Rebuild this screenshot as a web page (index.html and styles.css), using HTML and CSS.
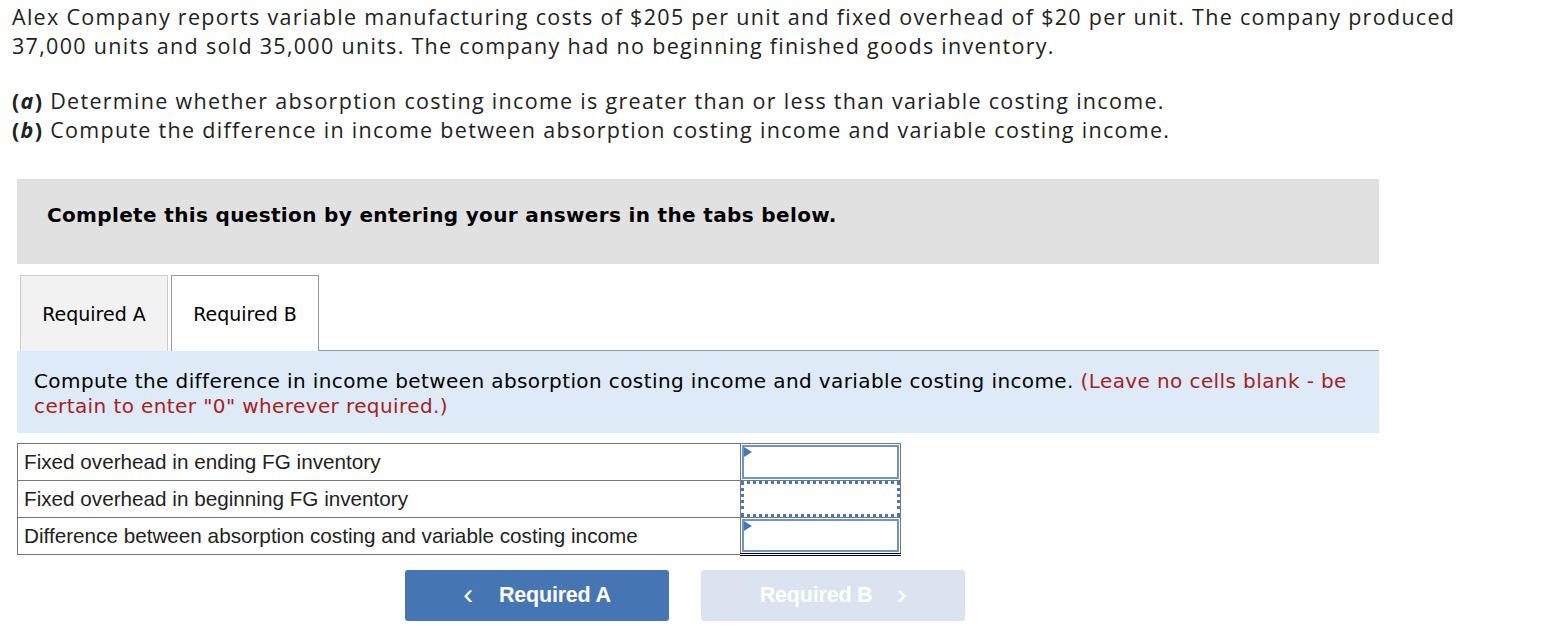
FILE: index.html
```html
<!DOCTYPE html>
<html>
<head>
<meta charset="utf-8">
<link rel="stylesheet" href="styles.css">
</head>
<body>
<div class="question">
  <p class="intro">Alex Company reports variable manufacturing costs of $205 per unit and fixed overhead of $20 per unit. The company produced 37,000 units and sold 35,000 units. The company had no beginning finished goods inventory.</p>
  <p class="parts"><b>(<i>a</i>)</b> Determine whether absorption costing income is greater than or less than variable costing income.<br><b>(<i>b</i>)</b> Compute the difference in income between absorption costing income and variable costing income.</p>
</div>
<div class="banner">Complete this question by entering your answers in the tabs below.</div>
<div class="tabs">
  <div class="tab">Required A</div>
  <div class="tab active">Required B</div>
  <div class="tab-fill"></div>
</div>
<div class="instr">Compute the difference in income between absorption costing income and variable costing income. <span class="red">(Leave no cells blank - be certain to enter "0" wherever required.)</span></div>
<table class="grid">
  <tr><td class="label">Fixed overhead in ending FG inventory</td><td class="cell"><div class="inp"><span class="flag"></span></div></td></tr>
  <tr><td class="label">Fixed overhead in beginning FG inventory</td><td class="cell"><div class="inp dotted"></div></td></tr>
  <tr class="last"><td class="label">Difference between absorption costing and variable costing income</td><td class="cell total"><div class="inp"><span class="flag"></span></div></td></tr>
</table>
<div class="nav">
  <div class="btn prev"><span class="chev">&lsaquo;</span>Required A</div>
  <div class="btn next">Required B<span class="chev">&rsaquo;</span></div>
</div>
</body>
</html>
```
FILE: styles.css
```css
* { box-sizing: border-box; }
body { margin: 0; padding: 0; background: #fff; }
.question { padding: 2px 12px 0 12px; width: 1490px; font-family: "Open Sans", "Lato", sans-serif; font-size: 21.5px; letter-spacing: 1.3px; color: #222; line-height: 29px; }
.question p { margin: 0; }
.intro { margin-bottom: 26px !important; }
.parts b { font-weight: 700; }
.banner { margin: 35px 173px 0 17px; height: 85px; background: #e1e1e1; font-family: "DejaVu Sans", Verdana, sans-serif; font-weight: 700; font-size: 20px; letter-spacing: 0.35px; padding: 24px 0 0 30px; color: #000; }
.tabs { display: flex; margin: 11px 173px 0 17px; height: 76px; align-items: flex-end; }
.tab { width: 148px; height: 76px; margin-left: 3px; border: 1px solid #ccc; border-bottom: none; background: #f2f2f2; font-family: "DejaVu Sans", Verdana, sans-serif; font-size: 19px; color: #000; display: flex; align-items: center; justify-content: center; padding-top: 1px; }
.tab.active { margin-left: 3px; background: #fff; border-color: #999; }
.tab-fill { flex: 1; border-bottom: 1px solid #999; height: 1px; }
.instr { margin: 0 173px 0 17px; background: #deeaf7; padding: 18px 17px 14px 17px; font-family: "DejaVu Sans", Verdana, sans-serif; font-size: 20px; letter-spacing: 0.4px; line-height: 25px; color: #000; }
.red { color: #a6221c; }
.grid { margin: 10px 0 0 17px; border-collapse: collapse; width: 884px; font-family: "Liberation Sans", Arial, sans-serif; font-size: 20.7px; color: #222; }
.grid td { border: 1px solid #777; height: 37px; padding: 0; }
.grid .last td { height: 35px; }
.grid .label { padding-left: 6px; width: 723px; }
.grid .cell { padding: 0; width: 160px; }
.inp { position: relative; height: 34px; margin: 1px; border: 2px solid #6e93ca; background: #fff; }
.inp.dotted { border: 3px dotted #4778bf; margin: 0; height: 36px; }
.grid .last .inp { height: 33px; }
.flag { position: absolute; left: 0; top: 0; width: 0; height: 0; border-top: 5px solid transparent; border-bottom: 5px solid transparent; border-left: 8px solid #4676bd; }
.grid .total { border-bottom: 3px double #000; }
.nav { display: flex; gap: 32px; margin: 14px 0 0 405px; }
.btn { width: 264px; height: 51px; border-radius: 3px; font-family: "Liberation Sans", Arial, sans-serif; font-weight: 700; font-size: 21.5px; letter-spacing: -0.2px; color: #fff; display: flex; align-items: center; justify-content: center; }
.btn.prev { background: #4675b3; }
.btn.next { background: #dae3ef; }
.chev { font-weight: 400; font-size: 30px; line-height: 20px; }
.prev .chev { margin-right: 26px; margin-top: -4px; }
.next .chev { margin-left: 24px; margin-top: -4px; }
```
